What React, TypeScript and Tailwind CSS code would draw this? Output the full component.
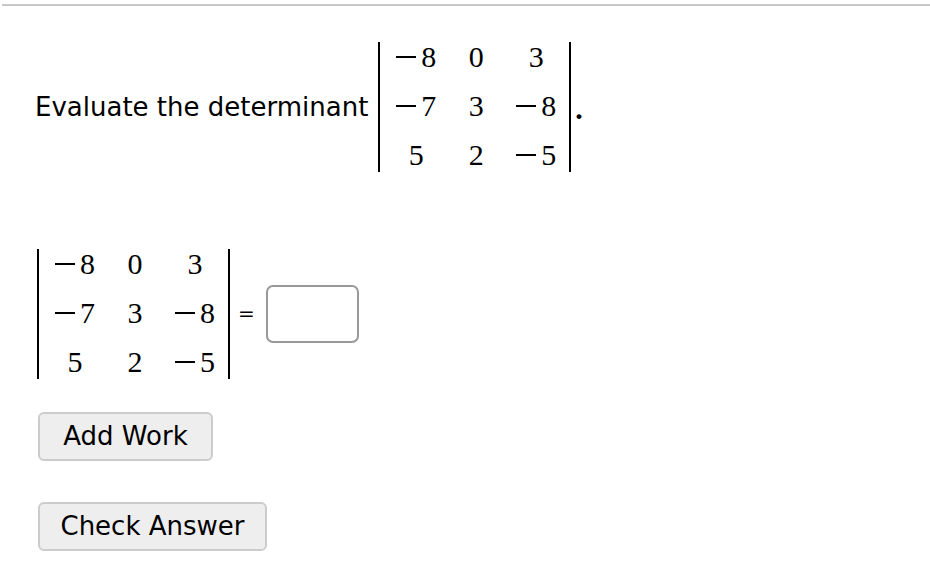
import React from "react";

function Cell({ v }: { v: string }) {
  const neg = v.startsWith("-");
  return (
    <div className="flex items-center justify-center h-[49px] text-[30px] leading-[49px] font-['Liberation_Serif',serif]">
      {neg && <span className="inline-block w-[20px] h-[2px] bg-black mr-[5px] mt-[1px]" />}
      <span>{neg ? v.slice(1) : v}</span>
    </div>
  );
}

function Det() {
  const vals = ["-8", "0", "3", "-7", "3", "-8", "5", "2", "-5"];
  return (
    <div className="flex">
      <div className="w-[2px] bg-black mt-[10px] h-[130px]" />
      <div className="grid grid-cols-[50px_40px_50px] gap-x-[15px] pl-[11px] pr-[8px]">
        {vals.map((v, i) => (
          <Cell key={i} v={v} />
        ))}
      </div>
      <div className="w-[2px] bg-black mt-[10px] h-[130px]" />
    </div>
  );
}

export default function App() {
  return (
    <div className="w-[930px] h-[578px] bg-white text-black overflow-hidden font-['DejaVu_Sans',sans-serif]">
      <div className="pt-[4px] pl-[2px]">
        <div className="h-[2px] bg-[#c8c8c8]" />
      </div>
      <div className="flex items-center pl-[35px] mt-[26px]">
        <span className="text-[26px] mr-[10px] mt-[4px]">Evaluate the determinant</span>
        <Det />
        <span className="text-[30px] ml-[4px] mt-[6px] font-bold font-['Liberation_Serif',serif]">.</span>
      </div>
      <div className="flex items-center pl-[37px] mt-[60px]">
        <Det />
        <span className="text-[20px] ml-[8px] mr-[11px]">=</span>
        <div className="w-[93px] h-[58px] border-2 border-[#999] rounded-[7px] mt-[2px]" />
      </div>
      <div className="pl-[38px] mt-[26px]">
        <button className="w-[175px] h-[49px] bg-[#eeeeee] border-2 border-[#cccccc] rounded-[6px] text-[26px]">
          Add Work
        </button>
      </div>
      <div className="pl-[38px] mt-[41px]">
        <button className="w-[229px] h-[49px] bg-[#eeeeee] border-2 border-[#cccccc] rounded-[6px] text-[26px]">
          Check Answer
        </button>
      </div>
    </div>
  );
}
